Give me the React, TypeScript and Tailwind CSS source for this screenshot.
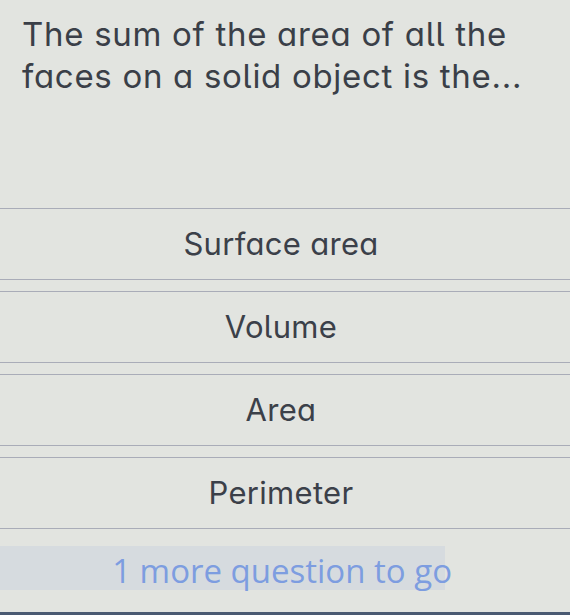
import React from 'react';

export default function App() {
  const options = ['Surface area', 'Volume', 'Area', 'Perimeter'];

  return (
    <div className="w-[570px] h-[615px] overflow-hidden bg-[#e2e4e0] flex flex-col relative">
      {/* Question */}
      <div className="pt-[13px] pl-[22px] pr-2 text-[33px] leading-[42px] tracking-[0.7px] text-[#3a3f48] font-['Inter',sans-serif] [font-feature-settings:'cv05','cv11']">
        The sum of the area of all the
        <br />
        faces on a solid object is the...
      </div>

      {/* Answer options */}
      <div className="mt-[111px] flex flex-col gap-[11px]">
        {options.map((opt) => (
          <div
            key={opt}
            className="h-[72px] border-y border-[#a9acb8] flex items-center justify-center pr-2 text-[31px] tracking-[0.3px] text-[#3b4049] font-['Inter',sans-serif] [font-feature-settings:'cv05','cv11']"
          >
            {opt}
          </div>
        ))}
      </div>

      {/* Progress */}
      <div className="mt-[17px] w-[445px] h-[44px] bg-[#d6dbdf] flex items-center justify-end">
        <span className="text-[33px] leading-none text-[#7d9de0] font-['Open_Sans',sans-serif] mr-[-7px] mt-[4px]">
          1 more question to go
        </span>
      </div>

      <div className="absolute left-0 right-0 bottom-0 h-[3px] bg-[#4a5a72]" />
    </div>
  );
}
